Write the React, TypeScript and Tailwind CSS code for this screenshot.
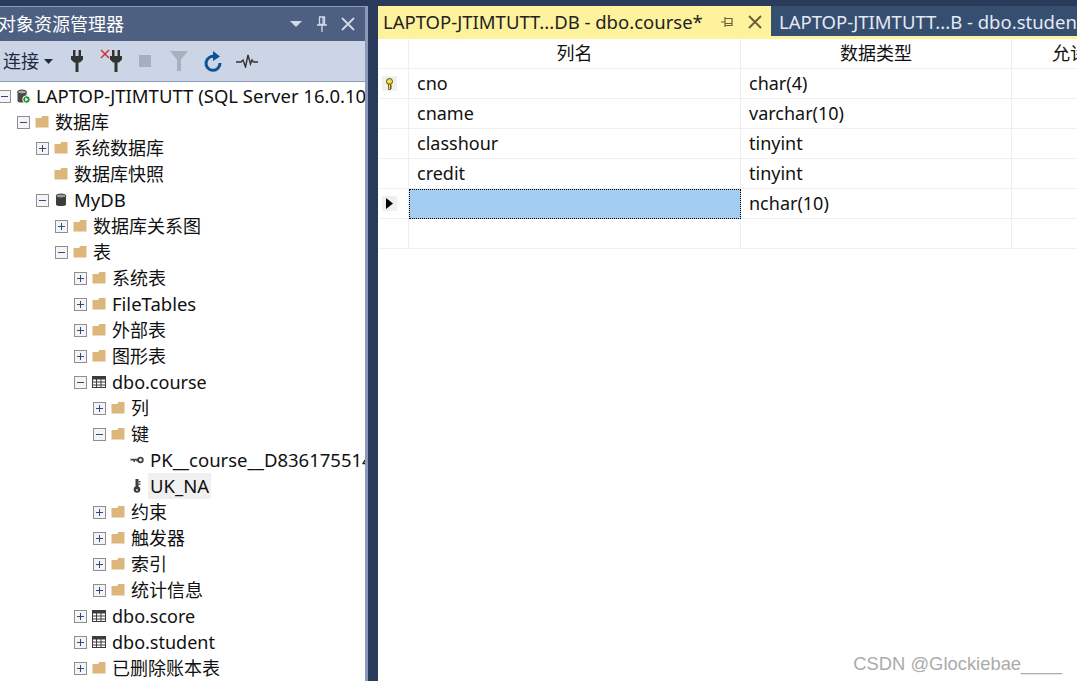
const uiFont = 'font-["Noto_Sans","Noto_Sans_CJK_SC",sans-serif]';

type IconKind = "server" | "folder" | "db" | "table" | "key" | "ukey";

type TreeRow = {
  level: number;
  label: string;
  icon: IconKind;
  box?: "plus" | "minus";
  active?: boolean;
  caps?: boolean;
};

const rows: TreeRow[] = [
  { level: 0, label: "LAPTOP-JTIMTUTT (SQL Server 16.0.1000.6 - sa)", icon: "server", box: "minus", caps: true },
  { level: 1, label: "数据库", icon: "folder", box: "minus" },
  { level: 2, label: "系统数据库", icon: "folder", box: "plus" },
  { level: 2, label: "数据库快照", icon: "folder" },
  { level: 2, label: "MyDB", icon: "db", box: "minus", caps: true },
  { level: 3, label: "数据库关系图", icon: "folder", box: "plus" },
  { level: 3, label: "表", icon: "folder", box: "minus" },
  { level: 4, label: "系统表", icon: "folder", box: "plus" },
  { level: 4, label: "FileTables", icon: "folder", box: "plus", caps: true },
  { level: 4, label: "外部表", icon: "folder", box: "plus" },
  { level: 4, label: "图形表", icon: "folder", box: "plus" },
  { level: 4, label: "dbo.course", icon: "table", box: "minus" },
  { level: 5, label: "列", icon: "folder", box: "plus" },
  { level: 5, label: "键", icon: "folder", box: "minus" },
  { level: 6, label: "PK__course__D8361755146A2C3F", icon: "key", caps: true },
  { level: 6, label: "UK_NA", icon: "ukey", active: true, caps: true },
  { level: 5, label: "约束", icon: "folder", box: "plus" },
  { level: 5, label: "触发器", icon: "folder", box: "plus" },
  { level: 5, label: "索引", icon: "folder", box: "plus" },
  { level: 5, label: "统计信息", icon: "folder", box: "plus" },
  { level: 4, label: "dbo.score", icon: "table", box: "plus" },
  { level: 4, label: "dbo.student", icon: "table", box: "plus" },
  { level: 4, label: "已删除账本表", icon: "folder", box: "plus" },
];

const columns = [
  { name: "cno", type: "char(4)", marker: "key" },
  { name: "cname", type: "varchar(10)" },
  { name: "classhour", type: "tinyint" },
  { name: "credit", type: "tinyint" },
  { name: "", type: "nchar(10)", marker: "arrow", selected: true },
  { name: "", type: "" },
];

const ExpandBox = ({ kind }: { kind: "plus" | "minus" }) => (
  <svg width="13" height="13" viewBox="0 0 13 13" className="shrink-0">
    <rect x="0.5" y="0.5" width="12" height="12" fill="#f4f4f4" stroke="#8e8f8f" />
    <path d={kind === "plus" ? "M3 6.5h7M6.5 3v7" : "M3 6.5h7"} stroke="#2f4a7c" strokeWidth="1" />
  </svg>
);

const TreeIcon = ({ kind }: { kind: IconKind }) => {
  if (kind === "folder") {
    return (
      <svg width="14" height="14" viewBox="0 0 14 14">
        <path d="M0.500 3h5.500l1.500-2h6v11.500H0.500z" fill="#dcb67a" />
      </svg>
    );
  }
  if (kind === "table") {
    return (
      <svg width="14" height="14" viewBox="0 0 14 14">
        <rect x="0.500" y="1.500" width="13" height="11" fill="#fff" stroke="#3c3c3c" />
        <path d="M0.500 2h13v2.500H0.500z" fill="#3c3c3c" />
        <path d="M0.500 7h13M0.500 10h13M4.500 4v8M9 4v8" stroke="#3c3c3c" />
      </svg>
    );
  }
  if (kind === "db") {
    return (
      <svg width="14" height="14" viewBox="0 0 14 14">
        <path d="M2 3v8.500c0 2 10 2 10 0V3z" fill="#3d3d3d" />
        <ellipse cx="7" cy="3" rx="5" ry="2" fill="#9a9a9a" stroke="#3d3d3d" />
      </svg>
    );
  }
  if (kind === "server") {
    return (
      <svg width="15" height="15" viewBox="0 0 15 15">
        <path d="M1.500 3v9c0 2 9 2 9 0V3z" fill="#4a4a4a" />
        <ellipse cx="6" cy="3" rx="4.500" ry="2" fill="#a8a8a8" stroke="#3d3d3d" />
        <circle cx="10.500" cy="10.500" r="3.800" fill="#2f8f3a" stroke="#fff" />
        <path d="M9.300 8.500v4l3-2z" fill="#fff" />
      </svg>
    );
  }
  if (kind === "key") {
    return (
      <svg width="14" height="14" viewBox="0 0 14 14">
        <path d="M0.500 5.800h7.500v2.700H6.500V7.500H5v1.500H3.500V7.500H0.500z" fill="#444" />
        <circle cx="10.500" cy="7" r="2.300" fill="none" stroke="#444" strokeWidth="1.800" />
      </svg>
    );
  }
  return (
    <svg width="14" height="16" viewBox="0 0 14 16">
      <path d="M5.500 1h3v9h-3z" fill="#3c3c3c" />
      <path d="M8.500 3H10.500v1.300H8.500zM8.500 5.500H10.500v1.300H8.500z" fill="#3c3c3c" />
      <circle cx="7" cy="11.500" r="3.300" fill="#3c3c3c" />
      <circle cx="7" cy="12" r="1" fill="#ddd" />
    </svg>
  );
};

const TreeLine = ({ row }: { row: TreeRow }) => (
  <div
    className="relative flex h-[26px] items-center"
    style={{ paddingLeft: row.level * 19 + 36 }}
  >
    {row.box && (
      <div className="absolute top-[7px]" style={{ left: row.level * 19 - 2 }}>
        <ExpandBox kind={row.box} />
      </div>
    )}
    <div
      className="absolute flex h-[26px] w-[16px] items-center justify-center"
      style={{ left: row.level * 19 + 15 }}
    >
      <TreeIcon kind={row.icon} />
    </div>
    <span
      className={`-ml-[2px] whitespace-nowrap px-[2px] leading-[26px] text-[#111] ${
        row.caps ? "text-[18.5px]" : "text-[18px]"
      } ${row.active ? "bg-[#f0f0f0]" : ""}`}
    >
      {row.label}
    </span>
  </div>
);

const Plug = () => (
  <svg width="12" height="22" viewBox="0 0 12 22" className="shrink-0">
    <path d="M2 0h2.500v6H7.500V0H10v6h2v3.500L9 12.500H7.500V22h-3V12.500H3L0 9.500V6h2z" fill="#333" />
  </svg>
);

const Toolbar = () => (
  <div className="flex h-[40px] items-center bg-[#ccd5e5] pl-[3px]">
    <span className="text-[18px] leading-none text-[#1e2a44]">连接</span>
    <svg width="9" height="5" viewBox="0 0 9 5" className="ml-[5px] mt-[1px]">
      <path d="M0 0h9L4.500 5z" fill="#1e2a44" />
    </svg>
    <div className="ml-[18px]">
      <Plug />
    </div>
    <div className="relative ml-[17px] flex w-[22px] justify-end">
      <svg width="10" height="10" viewBox="0 0 10 10" className="absolute -top-[1px] left-0">
        <path d="M1 1l8 8M9 1L1 9" stroke="#c8342a" strokeWidth="1.500" />
      </svg>
      <Plug />
    </div>
    <div className="ml-[17px] h-[12px] w-[12px] bg-[#a7aebd]" />
    <svg width="18" height="20" viewBox="0 0 18 20" className="ml-[19px]">
      <path d="M0 0h18l-7 8.500V20H7V8.500z" fill="#a8afbd" />
    </svg>
    <svg width="18" height="21" viewBox="0 0 18 21" className="ml-[16px]">
      <path d="M10.500 5.500A7 7 0 1 0 16 12" fill="none" stroke="#0b5394" strokeWidth="3" />
      <path d="M9 0l7 5.500L9 10z" fill="#0b5394" />
    </svg>
    <svg width="22" height="14" viewBox="0 0 22 14" className="ml-[14px]">
      <path d="M0 8h5l2-2 2.500 7L12 1l2.500 9L16 6l1.500 2H22" fill="none" stroke="#333" strokeWidth="1.400" />
    </svg>
  </div>
);

const TitleBar = () => (
  <div className="flex h-[34px] items-center justify-between bg-[#4d6082] pr-[10px]">
    <span className="-ml-[2px] whitespace-nowrap text-[18px] leading-none text-white">对象资源管理器</span>
    <div className="flex items-center">
      <svg width="12" height="6" viewBox="0 0 12 6">
        <path d="M0 0h12L6 6z" fill="#d3dae8" />
      </svg>
      <svg width="10" height="16" viewBox="0 0 10 16" className="ml-[15px]">
        <path d="M2.500 1h5v7.500h-5zM0 9h10M5 9v7M6 1v7" fill="none" stroke="#d3dae8" strokeWidth="1.300" />
      </svg>
      <svg width="14" height="14" viewBox="0 0 14 14" className="ml-[14px]">
        <path d="M1 1l12 12M13 1L1 13" stroke="#d3dae8" strokeWidth="1.800" />
      </svg>
    </div>
  </div>
);

const RowMarker = ({ marker }: { marker?: string }) => {
  if (!marker) return null;
  return (
    <div className="flex h-[15px] w-[15px] items-center justify-center bg-[#f0f0f0]">
      {marker === "key" ? (
        <svg width="9" height="12" viewBox="0 0 9 12">
          <circle cx="4.500" cy="3.500" r="3" fill="#f7e12c" stroke="#4d4a16" />
          <path d="M3.500 6h2v5.500h-2z" fill="#f7e12c" stroke="#4d4a16" strokeWidth="0.800" />
          <path d="M5.500 8H7M5.500 10H7" stroke="#4d4a16" />
        </svg>
      ) : (
        <svg width="7" height="11" viewBox="0 0 7 11">
          <path d="M0 0l7 5.500L0 11z" fill="#000" />
        </svg>
      )}
    </div>
  );
};

const cell = "flex h-[30px] items-center border-b border-r border-[#efefef] text-[18px] leading-[24px] text-[#111]";

const DesignGrid = () => (
  <div className="ml-px grid grid-cols-[30px_332px_271px_1fr]">
    <div className={cell} />
    <div className={`${cell} justify-center pb-[2px]`}>列名</div>
    <div className={`${cell} justify-center pb-[2px]`}>数据类型</div>
    <div className={`${cell} whitespace-nowrap border-r-0 pb-[2px] pl-[40px]`}>允许 Null 值</div>
    {columns.map((col, i) => (
      <div key={i} className="contents">
        <div className={`${cell} pl-[3px]`}>
          <RowMarker marker={col.marker} />
        </div>
        {col.selected ? (
          <div className="h-[30px] border border-dotted border-black bg-[#a3cef1]" />
        ) : (
          <div className={`${cell} pb-[2px] pl-[8px]`}>{col.name}</div>
        )}
        <div className={`${cell} pb-[2px] pl-[8px]`}>{col.type}</div>
        <div className={`${cell} border-r-0`} />
      </div>
    ))}
  </div>
);

const App = () => {
  return (
    <div className={`flex h-[681px] w-[1077px] overflow-hidden bg-[#2a3a5a] pt-[6px] ${uiFont}`}>
      {/* Object explorer */}
      <div className="flex w-[368px] shrink-0 flex-col border-r-[3px] border-t border-[#8c99b8]">
        <TitleBar />
        <Toolbar />
        <div className="flex-1 overflow-hidden border-t border-[#8c99b8] bg-white pt-px pr-px">
          {rows.map((row) => (
            <TreeLine key={row.label} row={row} />
          ))}
        </div>
      </div>

      {/* Table designer */}
      <div className="ml-[10px] flex min-w-0 flex-1 flex-col">
        <div className="flex h-[30px] shrink-0 overflow-hidden">
          <div className="flex w-[393px] shrink-0 items-center bg-[#fff29d] pl-[5px] pt-[2px] text-[#222]">
            <span className="w-[338px] whitespace-nowrap text-[18.5px] leading-none">LAPTOP-JTIMTUTT...DB - dbo.course*</span>
            <svg width="12" height="10" viewBox="0 0 12 10">
              <path d="M0 5h4M4 0v10M4 1.500h7v7H4M4 6.500h7" fill="none" stroke="#6b6038" strokeWidth="1.200" />
            </svg>
            <svg width="14" height="14" viewBox="0 0 14 14" className="ml-[15px]">
              <path d="M1 1l12 12M13 1L1 13" stroke="#6b6038" strokeWidth="2" />
            </svg>
          </div>
          <div className="flex-1 overflow-hidden bg-[#364e6f] pl-[8px] leading-[32px]">
            <span className="whitespace-nowrap text-[18.5px] text-[#e4eaf3]">LAPTOP-JTIMTUTT...B - dbo.student</span>
          </div>
        </div>
        <div className="h-[3px] shrink-0 bg-[#fff29d]" />
        <div className="relative flex-1 overflow-hidden bg-white">
          <DesignGrid />
          <span className='absolute bottom-[8px] right-[15px] whitespace-nowrap font-["Liberation_Sans",sans-serif] text-[18.4px] leading-none text-[#ababab]'>
            CSDN @Glockiebae____
          </span>
        </div>
      </div>
    </div>
  );
};

export default App;
